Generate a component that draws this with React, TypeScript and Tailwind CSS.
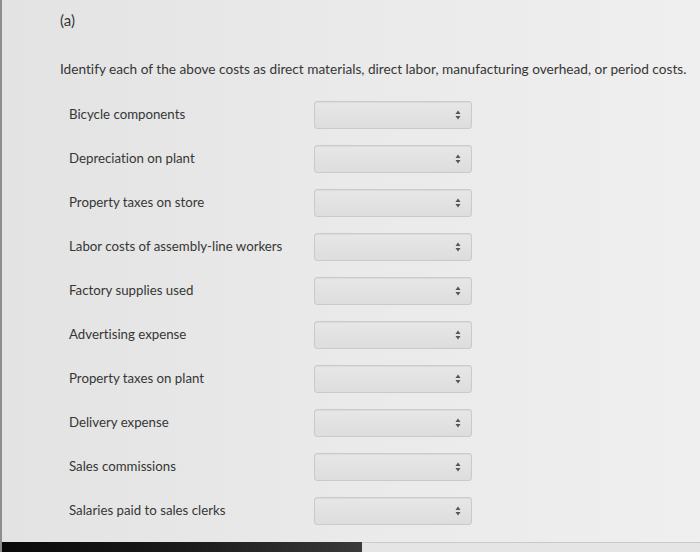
const costs = [
  "Bicycle components",
  "Depreciation on plant",
  "Property taxes on store",
  "Labor costs of assembly-line workers",
  "Factory supplies used",
  "Advertising expense",
  "Property taxes on plant",
  "Delivery expense",
  "Sales commissions",
  "Salaries paid to sales clerks",
];

const SelectBox = () => (
  <div className="flex h-[28px] w-[158px] items-center justify-end rounded-[3px] border border-[#c9cac9] bg-gradient-to-b from-[#e6e7e6] to-[#dcdddc] pr-[10px] shadow-[inset_0_1px_1px_rgba(0,0,0,0.05)]">
    <svg width="6" height="10" viewBox="0 0 6 10">
      <path d="M3 0.5 L5.5 4 L0.5 4 Z" fill="#555" />
      <path d="M3 9.5 L5.5 6 L0.5 6 Z" fill="#555" />
    </svg>
  </div>
);

export default function App() {
  return (
    <div
      className="flex h-[552px] w-[700px] flex-col overflow-hidden border-l-2 border-[#8d8e8d] bg-gradient-to-r from-[#e2e3e2] via-[#e9eae9] to-[#eeefee] text-[#363636] [font-variant-ligatures:none]"
      style={{ fontFamily: "Lato, 'Open Sans', sans-serif" }}
    >
      <div className="flex-1 pl-[58px]">
        <div className="pt-[10px] text-[15px] leading-[20px]">(a)</div>
        <div className="whitespace-nowrap pt-[29px] text-[13.65px] leading-[20px]">
          Identify each of the above costs as direct materials, direct labor, manufacturing overhead, or period costs.
        </div>
        <div className="pt-[14px]">
          {costs.map((c) => (
            <div key={c} className="flex h-[44px] items-center">
              <div className="w-[254px] pl-[9px] text-[13.25px]">{c}</div>
              <SelectBox />
            </div>
          ))}
        </div>
      </div>
      <div className="flex h-[10px]">
        <div className="w-[360px] bg-gradient-to-r from-[#0a0a0a] via-[#1a1a1a] to-[#3a3a3a]" />
        <div className="flex-1 border-t border-[#c9cac9] bg-[#e4e5e4]" />
      </div>
    </div>
  );
}
